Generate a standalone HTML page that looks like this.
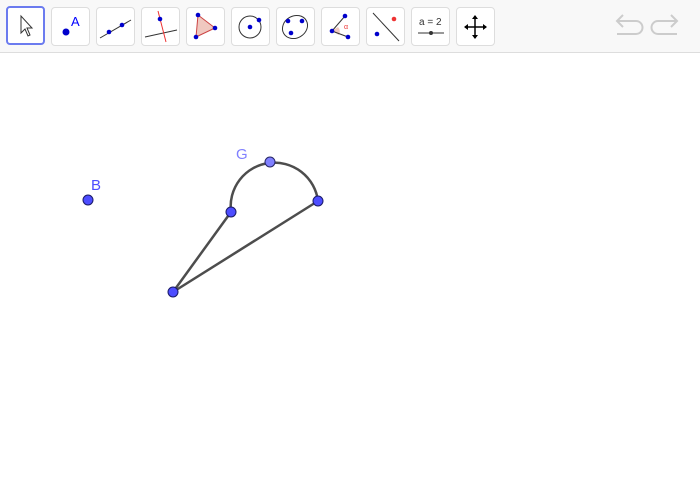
<!DOCTYPE html>
<html><head><style>
body{margin:0;width:700px;height:500px;background:#fff;overflow:hidden;font-family:"Liberation Sans",sans-serif}
#tb{position:absolute;left:0;top:0;width:700px;height:52px;background:#f8f8f8;border-bottom:1px solid #ddd}
.b{position:absolute;top:7px;width:37px;height:37px;background:#fff;border:1px solid #ddd;border-radius:4px}
.b svg{position:absolute;left:0;top:0}
</style></head><body>
<div id="tb">
<div class="b" style="left:6px;border:2px solid #6b7bef;width:35px;height:35px;top:6px"><svg width="35" height="35"><path d="M13 8 L13 25 L17 21 L20 28 L22 27 L19 20 L24 20 Z" fill="#fff" stroke="#333" stroke-width="1"/></svg></div>
<div class="b" style="left:51px"><svg width="37" height="37"><circle cx="14" cy="24" r="3.5" fill="#00c"/><text x="19" y="18" font-size="13" fill="#00f" font-family="Liberation Sans">A</text></svg></div>
<div class="b" style="left:96px"><svg width="37" height="37"><line x1="3" y1="30" x2="34" y2="12" stroke="#333"/><circle cx="12" cy="24" r="2.3" fill="#00c"/><circle cx="25" cy="17" r="2.3" fill="#00c"/></svg></div>
<div class="b" style="left:141px"><svg width="37" height="37"><line x1="3" y1="29" x2="35" y2="22" stroke="#333"/><line x1="16" y1="3" x2="24" y2="34" stroke="#e33"/><circle cx="18" cy="11" r="2.3" fill="#00c"/></svg></div>
<div class="b" style="left:186px"><svg width="37" height="37"><path d="M11 7 L28 20 L9 29 Z" fill="#f0c8c0" stroke="#c44"/><circle cx="11" cy="7" r="2.3" fill="#00c"/><circle cx="28" cy="20" r="2.3" fill="#00c"/><circle cx="9" cy="29" r="2.3" fill="#00c"/></svg></div>
<div class="b" style="left:231px"><svg width="37" height="37"><circle cx="18" cy="19" r="11" fill="none" stroke="#333"/><circle cx="18" cy="19" r="2.3" fill="#00c"/><circle cx="27" cy="12" r="2.3" fill="#00c"/></svg></div>
<div class="b" style="left:276px"><svg width="37" height="37"><ellipse cx="18" cy="19" rx="13" ry="11" transform="rotate(-30 18 19)" fill="none" stroke="#333"/><circle cx="11" cy="13" r="2.3" fill="#00c"/><circle cx="25" cy="13" r="2.3" fill="#00c"/><circle cx="14" cy="25" r="2.3" fill="#00c"/></svg></div>
<div class="b" style="left:321px"><svg width="37" height="37"><path d="M10 23 L16 19 A7 7 0 0 1 17 27 Z" fill="#f0c8c0"/><line x1="10" y1="23" x2="23" y2="8" stroke="#333"/><line x1="10" y1="23" x2="26" y2="29" stroke="#333"/><circle cx="10" cy="23" r="2.3" fill="#00c"/><circle cx="23" cy="8" r="2.3" fill="#00c"/><circle cx="26" cy="29" r="2.3" fill="#00c"/><text x="22" y="21" font-size="7" fill="#e33">α</text></svg></div>
<div class="b" style="left:366px"><svg width="37" height="37"><line x1="6" y1="5" x2="32" y2="33" stroke="#333"/><circle cx="27" cy="11" r="2.3" fill="#e33"/><circle cx="10" cy="26" r="2.3" fill="#00c"/></svg></div>
<div class="b" style="left:411px"><svg width="37" height="37"><text x="7" y="17" font-size="10" fill="#333" font-family="Liberation Sans">a = 2</text><line x1="6" y1="25" x2="32" y2="25" stroke="#333"/><circle cx="19" cy="25" r="2" fill="#333"/></svg></div>
<div class="b" style="left:456px"><svg width="37" height="37"><path d="M18 8 V30 M8 19 H29" stroke="#000" stroke-width="1.5"/><path d="M18 7 L15 11 H21Z M18 31 L15 27 H21Z M7 19 L11 16 V22Z M30 19 L26 16 V22Z" fill="#000"/></svg></div>
<svg style="position:absolute;left:612px;top:12px" width="70" height="30"><path d="M6 9 H24 A6.5 6.5 0 0 1 24 22 H5 M11 3 L5 9 L11 15" fill="none" stroke="#ccc" stroke-width="2"/><path d="M64 9 H46 A6.5 6.5 0 0 0 46 22 H65 M59 3 L65 9 L59 15" fill="none" stroke="#ccc" stroke-width="2"/></svg>
</div>
<svg style="position:absolute;left:0;top:0" width="700" height="500">
<path d="M231 212 A43.8 43.8 0 0 1 318 201" fill="none" stroke="#4d4d4d" stroke-width="2.5"/>
<line x1="173" y1="292" x2="231" y2="212" stroke="#4d4d4d" stroke-width="2.5"/>
<line x1="173" y1="292" x2="318" y2="201" stroke="#4d4d4d" stroke-width="2.5"/>
<circle cx="88" cy="200" r="5" fill="#4d4dff" stroke="#1a1a66"/>
<circle cx="173" cy="292" r="5" fill="#4d4dff" stroke="#1a1a66"/>
<circle cx="231" cy="212" r="5" fill="#4d4dff" stroke="#1a1a66"/>
<circle cx="318" cy="201" r="5" fill="#4d4dff" stroke="#1a1a66"/>
<circle cx="270" cy="162" r="5" fill="#8080ff" stroke="#262666"/>
<text x="91" y="190" font-size="15" fill="#4d4dff" font-family="Liberation Sans">B</text>
<text x="236" y="159" font-size="15" fill="#8080ff" font-family="Liberation Sans">G</text>
</svg>
</body></html>
